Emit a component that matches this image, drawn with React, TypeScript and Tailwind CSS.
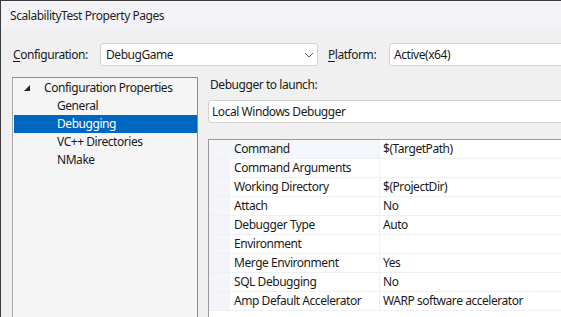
import React from "react";

const font = { fontFamily: '"Noto Sans", "Open Sans", sans-serif' };

const props: [string, string][] = [
  ["Command", "$(TargetPath)"],
  ["Command Arguments", ""],
  ["Working Directory", "$(ProjectDir)"],
  ["Attach", "No"],
  ["Debugger Type", "Auto"],
  ["Environment", ""],
  ["Merge Environment", "Yes"],
  ["SQL Debugging", "No"],
  ["Amp Default Accelerator", "WARP software accelerator"],
];

const tree = ["General", "Debugging", "VC++ Directories", "NMake"];

function Chevron() {
  return (
    <svg width="10" height="6" viewBox="0 0 10 6" className="shrink-0">
      <path d="M1 1 L5 5 L9 1" fill="none" stroke="#5a5a5a" strokeWidth="1" />
    </svg>
  );
}

export default function App() {
  return (
    <div
      style={font}
      className="flex h-[317px] w-[561px] flex-col overflow-hidden border-l border-t border-[#3b3b3b] bg-[#f0f0f0] text-[12px] leading-4 tracking-[-0.45px] text-[#1a1a1a]"
    >
      {/* title bar */}
      <div className="flex h-[29px] shrink-0 items-center bg-[#f3f2f7] pl-[9px] pt-px text-[#1f1f1f]">
        ScalabilityTest Property Pages
      </div>

      {/* configuration row */}
      <div className="flex items-center pl-[11px] pt-[13px]">
        <span className="w-[88px] shrink-0 pl-px">
          <span className="underline underline-offset-2">C</span>onfiguration:
        </span>
        <div className="flex h-[23px] w-[218px] shrink-0 items-center justify-between rounded-[3px] border border-[#d2d2d2] bg-white pl-[5px] pr-[3px]">
          <span>DebugGame</span>
          <Chevron />
        </div>
        <span className="ml-[10px] w-[61px] shrink-0">
          <span className="underline underline-offset-2">P</span>latform:
        </span>
        <div className="flex h-[23px] w-[200px] shrink-0 items-center rounded-[3px] border border-[#d2d2d2] bg-white pl-[4px]">
          Active(x64)
        </div>
      </div>

      {/* main */}
      <div className="flex min-h-0 flex-1 pl-[11px] pt-[11px]">
        <div className="h-[260px] w-[186px] shrink-0 border border-[#8c8c8c] border-l-[#a8a8a8] bg-[#f5f5f5] pt-px">
          <div className="flex h-[18px] items-center">
            <svg width="6" height="6" viewBox="0 0 6 6" className="ml-[11px] mr-[14px]">
              <polygon points="6,0 6,6 0,6" fill="#262626" />
            </svg>
            <span>Configuration Properties</span>
          </div>
          {tree.map((t) => (
            <div
              key={t}
              className={
                t === "Debugging"
                  ? "ml-px flex h-[18px] items-center bg-[#0067c0] pl-[43px] text-white"
                  : "flex h-[18px] items-center pl-[44px]"
              }
            >
              {t}
            </div>
          ))}
        </div>

        <div className="ml-[10px] flex min-w-0 flex-1 flex-col">
          <div className="flex h-[15px] items-center pl-[2px]">Debugger to launch:</div>
          <div className="mt-[8px] flex h-[23px] w-[400px] shrink-0 items-center rounded-[3px] border border-[#d2d2d2] bg-white pl-[3px]">
            Local Windows Debugger
          </div>

          <div className="mt-[16px] h-[200px] w-[400px] shrink-0 border-l border-t border-[#9a9a9a] bg-white">
            {props.map(([name, value], i) => (
              <div key={name} className="flex h-[19px] border-b border-[#eef0f4]">
                <div className="w-[21px] shrink-0 bg-[#f3f5fa]" />
                <div
                  className={
                    i === 0
                      ? "flex w-[150px] shrink-0 items-center border-r border-[#eef0f4] bg-[#f3f6fb] pl-[4px]"
                      : "flex w-[150px] shrink-0 items-center border-r border-[#eef0f4] pl-[4px]"
                  }
                >
                  {name}
                </div>
                <div className="flex flex-1 items-center pl-[3px]">{value}</div>
              </div>
            ))}
          </div>
        </div>
      </div>
    </div>
  );
}
